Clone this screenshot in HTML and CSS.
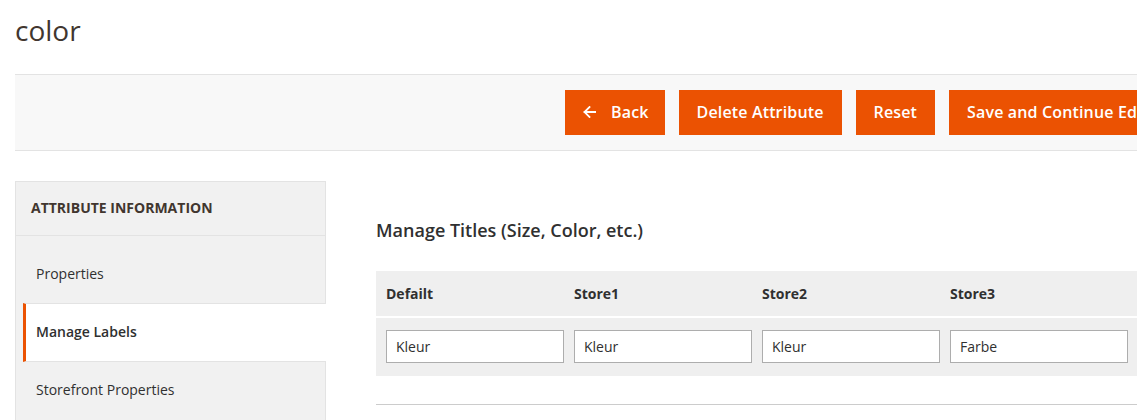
FILE: index.html
```html
<!DOCTYPE html>
<html lang="en">
<head>
<meta charset="utf-8">
<title>color</title>
<link rel="stylesheet" href="styles.css">
</head>
<body>
<div class="page">
  <h1 class="page-title">color</h1>
  <div class="actions-bar">
    <div class="actions">
      <button class="btn btn-back" type="button">
        <svg class="back-icon" width="13" height="12" viewBox="0 0 13 12" aria-hidden="true">
          <path d="M1.5 6 H12.5 M6.5 1 L1.5 6 L6.5 11" fill="none" stroke="#fff" stroke-width="1.8" stroke-linecap="square"/>
        </svg>
        <span>Back</span>
      </button>
      <button class="btn" type="button">Delete Attribute</button>
      <button class="btn" type="button">Reset</button>
      <button class="btn" type="button">Save and Continue Edit</button>
      <button class="btn" type="button">Save Attribute</button>
    </div>
  </div>
  <div class="layout">
    <nav class="side-nav">
      <div class="nav-title">Attribute Information</div>
      <ul class="nav-items">
        <li class="nav-item">Properties</li>
        <li class="nav-item active">Manage Labels</li>
        <li class="nav-item">Storefront Properties</li>
      </ul>
    </nav>
    <main class="content">
      <h2 class="section-title">Manage Titles (Size, Color, etc.)</h2>
      <table class="titles">
        <thead>
          <tr>
            <th>Defailt</th>
            <th>Store1</th>
            <th>Store2</th>
            <th>Store3</th>
            <th>Store4</th>
          </tr>
        </thead>
        <tbody>
          <tr>
            <td><input class="text-input" type="text" value="Kleur"></td>
            <td><input class="text-input" type="text" value="Kleur"></td>
            <td><input class="text-input" type="text" value="Kleur"></td>
            <td><input class="text-input" type="text" value="Farbe"></td>
            <td><input class="text-input" type="text" value=""></td>
          </tr>
        </tbody>
      </table>
      <div class="divider"></div>
    </main>
  </div>
</div>
</body>
</html>
```

FILE: styles.css
```css
html, body {
  margin: 0;
  padding: 0;
  overflow: hidden;
  background: #fff;
}

body {
  font-family: "Open Sans", "Liberation Sans", sans-serif;
  color: #303030;
  font-size: 14px;
}

.page {
  width: 1400px;
  padding: 13px 0 0 15px;
}

.page-title {
  margin: 0;
  font-size: 28px;
  line-height: 34px;
  font-weight: 400;
  color: #41362f;
}

.actions-bar {
  margin-top: 27px;
  background: #f8f8f8;
  border-top: 1px solid #e3e3e3;
  border-bottom: 1px solid #e3e3e3;
  padding: 15px 0 15px 550px;
}

.actions {
  display: flex;
  gap: 14px;
}

.btn {
  display: flex;
  align-items: center;
  gap: 15px;
  height: 45px;
  padding: 0 17px 1px;
  background: #eb5202;
  border: 1px solid #eb5202;
  border-radius: 0;
  color: #fff;
  font-family: "Open Sans", "Liberation Sans", sans-serif;
  font-size: 16px;
  font-weight: 600;
  letter-spacing: 0.15px;
  white-space: nowrap;
  flex: none;
}

.btn-back {
  padding: 0 15px 1px 17px;
}

.back-icon {
  display: block;
}

.layout {
  display: grid;
  grid-template-columns: 311px 1fr;
  column-gap: 50px;
  margin-top: 30px;
}

.side-nav {
  background: #f1f1f1;
  border: 1px solid #e3e3e3;
  align-self: start;
  height: 300px;
}

.nav-title {
  padding: 17px 15px 18px;
  font-size: 14px;
  line-height: 18px;
  font-weight: 700;
  text-transform: uppercase;
  color: #41362f;
  border-bottom: 1px solid #e3e3e3;
}

.nav-items {
  list-style: none;
  margin: 0;
  padding: 10px 0 0;
}

.nav-item {
  margin-left: 7px;
  padding: 19px 10px 20px;
  border-left: 3px solid transparent;
  border-bottom: 1px solid #e3e3e3;
  font-size: 14px;
  line-height: 18px;
  color: #303030;
}

.nav-item:last-child {
  border-bottom: 0;
}

.nav-item.active {
  background: #fff;
  border-left-color: #eb5202;
  margin-right: -1px;
  font-weight: 600;
  margin-top: -1px;
  border-top: 1px solid #e3e3e3;
}

.content {
  padding-top: 39px;
}

.section-title {
  margin: 0;
  font-size: 18px;
  line-height: 20px;
  font-weight: 600;
  color: #303030;
}

.titles {
  margin-top: 31px;
  border-collapse: collapse;
  background: #efefef;
  table-layout: fixed;
}

.titles th {
  width: 178px;
  padding: 14px 0 13px 10px;
  text-align: left;
  font-size: 14px;
  line-height: 18px;
  font-weight: 700;
  color: #303030;
  border-bottom: 2px solid #fff;
}

.titles td {
  padding: 12px 0 13px 10px;
}

.text-input {
  display: block;
  box-sizing: border-box;
  width: 178px;
  height: 33px;
  margin: 0;
  padding: 0 9px;
  border: 1px solid #adadad;
  border-radius: 0;
  background: #fff;
  font-family: "Open Sans", "Liberation Sans", sans-serif;
  font-size: 14px;
  color: #303030;
}

.divider {
  margin-top: 28px;
  border-top: 1px solid #cccccc;
}
```
